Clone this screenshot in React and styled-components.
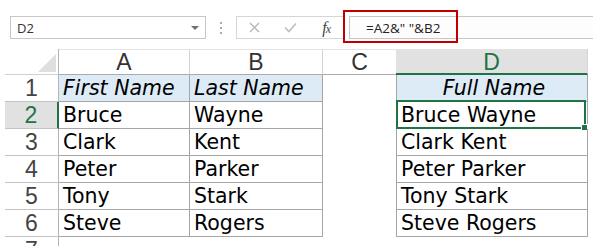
import React from 'react';
import styled, { createGlobalStyle } from 'styled-components';

const GREEN = '#217346';

const Global = createGlobalStyle`
  html, body { margin: 0; padding: 0; background: #fff; overflow: hidden; }
  body { width: 593px; height: 246px; }
`;

const Page = styled.div`
  padding-top: 16px;
`;

const FormulaBar = styled.div`
  display: flex;
  height: 23px;
  margin-left: 10px;
  font-family: "Open Sans", "Noto Sans", sans-serif;
  font-size: 13px;
  color: #333;
`;

const NameBox = styled.div`
  box-sizing: border-box;
  width: 196px;
  height: 23px;
  border: 1px solid #c6c6c6;
  background: #fff;
  display: flex;
  align-items: center;
  justify-content: space-between;
  padding: 0 6px 0 6px;
`;

const Caret = styled.span`
  width: 0;
  height: 0;
  border-left: 4px solid transparent;
  border-right: 4px solid transparent;
  border-top: 4px solid #707070;
`;

const Dots = styled.div`
  width: 30px;
  display: flex;
  flex-direction: column;
  align-items: center;
  justify-content: center;
  gap: 3px;
`;

const Dot = styled.span`
  width: 2px;
  height: 2px;
  background: #a8a8a8;
`;

const ButtonBox = styled.div`
  box-sizing: border-box;
  width: 109px;
  height: 23px;
  border: 1px solid #d6d6d6;
  background: #fff;
  display: flex;
  align-items: center;
`;

const IconSlot = styled.div`
  width: 36px;
  display: flex;
  justify-content: center;
  align-items: center;
`;

const Fx = styled.span`
  font-family: "Liberation Serif", serif;
  font-style: italic;
  font-size: 16px;
  color: #444;
  line-height: 1;
  letter-spacing: -1px;
  & small {
    font-size: 12px;
  }
`;

const FormulaInput = styled.div`
  box-sizing: border-box;
  flex: 1;
  height: 23px;
  margin-left: 4px;
  border: 1px solid #c6c6c6;
  border-right: none;
  background: #fdfdfd;
  padding-left: 16px;
  display: flex;
  align-items: center;
  position: relative;
  color: #222;
  font-size: 13.5px;
`;

const Highlight = styled.div`
  position: absolute;
  left: -7px;
  top: -7px;
  width: 115px;
  height: 33px;
  box-sizing: border-box;
  border: 2px solid #c00000;
`;

const Grid = styled.div`
  display: grid;
  grid-template-columns: 54px 131px 133px 73px 192px;
  grid-template-rows: 26px repeat(7, 27px);
  margin: 10px 0 0 5px;
`;

const Corner = styled.div`
  box-sizing: border-box;
  border-right: 1px solid #b4b4b4;
  border-bottom: 1px solid #d0d0d0;
  display: flex;
  justify-content: flex-end;
  align-items: flex-end;
  padding: 0 2px 2px 0;
`;

const Triangle = styled.span`
  width: 0;
  height: 0;
  border-left: 18px solid transparent;
  border-bottom: 18px solid #dfdfdf;
`;

const ColHead = styled.div`
  box-sizing: border-box;
  border-top: 1px solid #e3e3e3;
  border-bottom: ${p => (p.$active ? `2px solid ${GREEN}` : '1px solid #ababab')};
  border-right: ${p => (p.$noSep ? 'none' : '1px solid #d4d4d4')};
  background: ${p => (p.$active ? '#e1e1e1' : '#fff')};
  color: ${p => (p.$active ? GREEN : '#333')};
  font-family: "Liberation Sans", Arial, sans-serif;
  font-size: 23px;
  line-height: 24px;
  text-align: center;
`;

const RowHead = styled.div`
  box-sizing: border-box;
  border-right: ${p => (p.$active ? `2px solid ${GREEN}` : '1px solid #b4b4b4')};
  border-bottom: 1px solid #c4c4c4;
  background: ${p => (p.$active ? '#e1e1e1' : '#fff')};
  color: ${p => (p.$active ? GREEN : '#444')};
  font-family: "Liberation Sans", Arial, sans-serif;
  font-size: 23px;
  line-height: 26px;
  text-align: center;
  overflow: hidden;
`;

const Cell = styled.div`
  box-sizing: border-box;
  position: relative;
  font-family: "DejaVu Sans", Verdana, sans-serif;
  font-size: 20.5px;
  line-height: 26px;
  color: #000;
  white-space: nowrap;
  padding-left: 4px;
  text-align: ${p => (p.$center ? 'center' : 'left')};
  font-style: ${p => (p.$head ? 'italic' : 'normal')};
  background: ${p => (p.$head ? '#ddebf7' : 'transparent')};
  border-right: ${p => (p.$bordered ? '1px solid #a6a6a6' : 'none')};
  border-bottom: ${p => (p.$bordered ? '1px solid #a6a6a6' : 'none')};
  border-left: ${p => (p.$leftBorder ? '1px solid #a6a6a6' : 'none')};
`;

const Selection = styled.div`
  position: absolute;
  left: -1px;
  top: -2px;
  right: 1px;
  bottom: -1px;
  border: 2px solid ${GREEN};
  pointer-events: none;
`;

const Handle = styled.div`
  position: absolute;
  right: -4px;
  bottom: -4px;
  width: 5px;
  height: 5px;
  background: ${GREEN};
  border: 1px solid #fff;
`;

const XIcon = () => (
  <svg width="11" height="11" viewBox="0 0 11 11">
    <path d="M1 1 L10 10 M10 1 L1 10" stroke="#b4b4b4" strokeWidth="1.3" fill="none" />
  </svg>
);

const CheckIcon = () => (
  <svg width="13" height="11" viewBox="0 0 13 11">
    <path d="M1 5.5 L4.8 9.5 L12 1.5" stroke="#bdbdbd" strokeWidth="1.6" fill="none" />
  </svg>
);

const rows = [
  ['Bruce', 'Wayne'],
  ['Clark', 'Kent'],
  ['Peter', 'Parker'],
  ['Tony', 'Stark'],
  ['Steve', 'Rogers'],
];

export default function App() {
  return (
    <Page>
      <Global />
      <FormulaBar>
        <NameBox>
          <span>D2</span>
          <Caret />
        </NameBox>
        <Dots>
          <Dot />
          <Dot />
          <Dot />
        </Dots>
        <ButtonBox>
          <IconSlot><XIcon /></IconSlot>
          <IconSlot><CheckIcon /></IconSlot>
          <IconSlot><Fx>f<small>x</small></Fx></IconSlot>
        </ButtonBox>
        <FormulaInput>
          <Highlight />
          <span>=A2&amp;" "&amp;B2</span>
        </FormulaInput>
      </FormulaBar>

      <Grid>
        <Corner><Triangle /></Corner>
        <ColHead>A</ColHead>
        <ColHead>B</ColHead>
        <ColHead $noSep>C</ColHead>
        <ColHead $active>D</ColHead>

        <RowHead>1</RowHead>
        <Cell $head $bordered>First Name</Cell>
        <Cell $head $bordered>Last Name</Cell>
        <Cell />
        <Cell $head $bordered $leftBorder $center>Full Name</Cell>

        {rows.map(([first, last], i) => (
          <React.Fragment key={first}>
            <RowHead $active={i === 0}>{i + 2}</RowHead>
            <Cell $bordered>{first}</Cell>
            <Cell $bordered>{last}</Cell>
            <Cell />
            <Cell $bordered $leftBorder>
              {first} {last}
              {i === 0 && (
                <Selection>
                  <Handle />
                </Selection>
              )}
            </Cell>
          </React.Fragment>
        ))}

        <RowHead>7</RowHead>
        <Cell />
        <Cell />
        <Cell />
        <Cell />
      </Grid>
    </Page>
  );
}
